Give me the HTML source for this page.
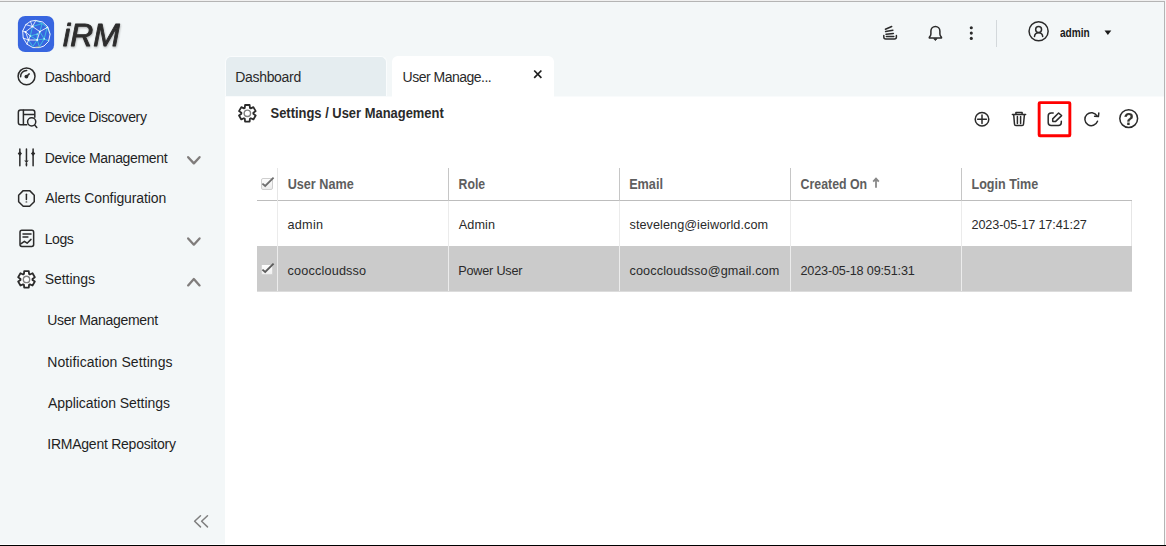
<!DOCTYPE html>
<html lang="en">
<head>
<meta charset="utf-8">
<title>iRM - User Management</title>
<style>
*{box-sizing:border-box;margin:0;padding:0}
html,body{width:1166px;height:546px;overflow:hidden;background:#fff}
body{font-family:"Liberation Sans",Arial,sans-serif;color:#1f1f1f;position:relative;font-size:14px}
.abs{position:absolute}
#frame{position:absolute;left:0;top:0;width:1166px;height:546px;background:#f3f7f8}
#topline{position:absolute;left:0;top:0;width:1166px;height:2px;background:linear-gradient(#f0f0f0 0,#f0f0f0 1px,#b4b4b4 1px,#b4b4b4 2px)}
#rightline{position:absolute;left:1164px;top:1px;width:1px;height:544px;background:#b4b4b4}
#rightwhite{position:absolute;left:1165px;top:0;width:1px;height:546px;background:#f6f6f6}
#bottomwhite{position:absolute;left:0;top:544px;width:1164px;height:1px;background:#fff}
#bottomline{position:absolute;left:0;top:545px;width:1166px;height:1px;background:#000}
#content{position:absolute;left:225px;top:96px;width:939px;height:449px;background:linear-gradient(#f9fbfc 0,#f9fbfc 1px,#fff 1px)}
.t{position:absolute;white-space:nowrap;line-height:16px;height:16px;font-size:14px;color:#1f1f1f}
.nav{left:45px}
.sub{left:47.5px}
.tab{position:absolute;top:56px;height:40px;border-radius:6px 6px 0 0;border:1px solid #fafcfd;border-bottom:none}
.th{position:absolute;white-space:nowrap;font-weight:bold;color:#5e5e5e;font-size:14px;line-height:16px;top:176px;transform-origin:0 0}
.td{position:absolute;white-space:nowrap;color:#2a2a2a;font-size:12.67px;line-height:16px}
.vh{position:absolute;top:168px;width:1px;height:33px;background:#c6c6c6}
.vb{position:absolute;top:201px;width:1px;height:45px;background:#ebebeb}
.vs{position:absolute;top:246px;width:1px;height:45px;background:#ececec}
svg{position:absolute;overflow:visible}
.ic{fill:none;stroke:#2b2b2b;stroke-width:1.5;stroke-linecap:round;stroke-linejoin:round}
</style>
<style id="fit">
#n1{left:44.63px !important;letter-spacing:-0.290px}
#n2{left:44.63px !important;letter-spacing:-0.392px}
#n3{left:44.66px !important;letter-spacing:-0.340px}
#n4{left:45.27px !important;letter-spacing:-0.103px}
#n5{left:44.66px !important;letter-spacing:-0.380px}
#n6{left:44.76px !important;letter-spacing:-0.063px}
#s1{left:47.22px !important;letter-spacing:-0.296px}
#s2{left:47.29px !important;letter-spacing:0.078px}
#s3{left:47.90px !important;letter-spacing:-0.046px}
#s4{left:47.34px !important;letter-spacing:-0.249px}
#tab1{left:235.24px !important;letter-spacing:-0.317px}
#tab2{left:402.54px !important;letter-spacing:-0.500px}
#bc{left:270px !important;transform:translateX(0.55px) scaleX(0.9237)}
#h1{left:287px !important;transform:translateX(0.64px) scaleX(0.9038)}
#h2{left:458px !important;transform:translateX(0.62px) scaleX(0.8748)}
#h3{left:629px !important;transform:translateX(0.14px) scaleX(0.9056)}
#h4{left:800px !important;transform:translateX(0.59px) scaleX(0.8814)}
#h5{left:971px !important;transform:translateX(0.53px) scaleX(0.8964)}
#c11{left:287.46px !important;letter-spacing:0.271px}
#c12{left:458.81px !important;letter-spacing:0.084px}
#c13{left:629.59px !important;letter-spacing:0.052px}
#c15{left:971.50px !important;letter-spacing:-0.119px}
#c21{left:287.48px !important;letter-spacing:0.182px}
#c22{left:458.15px !important;letter-spacing:-0.186px}
#c23{left:629.48px !important;letter-spacing:0.126px}
#c24{left:800.50px !important;letter-spacing:-0.179px}
</style>
</head>
<body>
<div id="frame"></div>
<div id="content"></div>

<!-- ===== logo ===== -->
<svg id="logo" style="left:18px;top:16px" width="36" height="36" viewBox="0 0 36 36">
  <rect x="-0.1" y="-0.1" width="36.2" height="36.2" rx="7.2" fill="#3866e0"/>
  <g fill="none" stroke="#3fd6e0" stroke-width="0.75" stroke-linejoin="round" stroke-linecap="round">
    <path d="M17.8 4.6 L24.2 7.6 L29.1 11.6 L26.2 22.9 L21.8 15.6 L24.2 7.6 L14.5 10.5"/>
    <path d="M12.3 20 L19.2 18.1 L21.8 15.6 M12.3 20 L19.2 24 L26.2 22.9 L21.4 30.6 L19.2 24 L14.8 30.6 L10.5 24 M14.5 10.5 L12.3 20 M19.2 18.1 L19.2 24 M26.2 22.9 L30.8 25 M29.1 11.6 L32 18"/>
  </g>
  <g fill="none" stroke="#ffffff" stroke-width="0.8" stroke-linejoin="round" stroke-linecap="round">
    <path d="M17.8 4.5 L24.6 6 L29.8 10.8 L32.1 18.2 L30.6 25.4 L26 30 L21.4 31.6 L14.8 31.6 L9 28.2 L5.2 22 L4.7 15 L7.8 8.6 L12.4 5.4 Z" stroke-width="0.9"/>
    <path d="M17.8 4.6 L14.5 10.5 L7.5 15.9 L4.7 15 M7.8 8.6 L14.5 10.5 L21.8 15.6 L29.1 11.6 M7.5 15.9 L10.5 24 L19.2 24 L21.8 15.6 M7.5 15.9 L12.3 20 L10.5 24 L5.2 22 M10.5 24 L9 28.2 M12.4 5.4 L14.5 10.5"/>
  </g>
  <g fill="#ffffff">
    <circle cx="14.5" cy="10.5" r="1.1"/><circle cx="7.5" cy="15.9" r="1"/><circle cx="21.8" cy="15.6" r="0.95"/><circle cx="29.1" cy="11.6" r="0.8"/><circle cx="10.5" cy="24" r="0.9"/><circle cx="19.2" cy="24" r="0.9"/><circle cx="26.2" cy="22.9" r="0.8" fill="#c8fbff"/><circle cx="12.3" cy="20" r="0.75" fill="#c8fbff"/><circle cx="19.2" cy="18.1" r="0.7" fill="#c8fbff"/>
  </g>
  <path d="M17.4 31.2 L21.6 30.8" stroke="#b9c98a" stroke-width="0.8" fill="none"/>
</svg>
<svg id="logotext" style="left:58px;top:14px;will-change:transform" width="70" height="40" viewBox="0 0 70 40">
  <defs><filter id="ds" x="-20%" y="-20%" width="140%" height="150%"><feGaussianBlur stdDeviation="1.2"/></filter></defs>
  <text x="5.6" y="33.2" font-family="Liberation Sans, Arial, sans-serif" font-style="italic" font-size="31.6" fill="#000" stroke="#000" stroke-width="0.9" stroke-linejoin="round" opacity="0.3" filter="url(#ds)" textLength="56.6" lengthAdjust="spacingAndGlyphs">iRM</text>
  <text x="5.1" y="31.7" font-family="Liberation Sans, Arial, sans-serif" font-style="italic" font-size="31.6" fill="#2d2d2d" stroke="#2d2d2d" stroke-width="0.9" stroke-linejoin="round" textLength="56.6" lengthAdjust="spacingAndGlyphs">iRM</text>
</svg>

<!-- ===== sidebar ===== -->
<div id="sidebar">
  <!-- dashboard icon -->
  <svg style="left:16px;top:66px" width="22" height="22" viewBox="0 0 22 22">
    <circle class="ic" cx="10.55" cy="10.35" r="8.45" stroke-width="1.7"/>
    <path class="ic" d="M4.6 10.7 A5.95 5.95 0 0 1 10.7 4.5" stroke-width="1.2"/>
    <path class="ic" d="M10.4 10.6 L13.2 7.9" stroke-width="1" stroke="#888"/>
    <circle cx="10.4" cy="10.6" r="1.9" fill="#2b2b2b"/>
  </svg>
  <div class="t nav" id="n1" style="top:69px">Dashboard</div>

  <!-- device discovery icon -->
  <svg style="left:16px;top:108px" width="23" height="22" viewBox="0 0 23 22">
    <path class="ic" d="M10.8 16.85 H4.6 Q2.35 16.85 2.35 14.6 V4.15 Q2.35 1.9 4.6 1.9 H16.55 Q18.8 1.9 18.8 4.15 V9.2" stroke-width="1.7"/>
    <path class="ic" d="M7.4 2.2 V16.6" stroke-width="1.3" stroke="#4a4a4a"/>
    <path class="ic" d="M7.9 6.4 H18.2" stroke-width="1.5" stroke="#8c8c8c" stroke-linecap="butt"/>
    <circle class="ic" cx="15.67" cy="13.86" r="4.1" stroke-width="1.7"/>
    <path class="ic" d="M18.9 17.2 L20.8 19.4" stroke-width="1.5"/>
  </svg>
  <div class="t nav" id="n2" style="top:109px">Device Discovery</div>

  <!-- device management icon -->
  <svg style="left:16px;top:146px" width="22" height="23" viewBox="0 0 22 23">
    <path class="ic" d="M3.85 3 V19.8 M17.1 3 V19.8 M10.45 3 V14.2 M10.45 18.2 V19.8" stroke-width="2"/>
    <path fill="#2b2b2b" d="M3.85 5.2 L6 7.6 L3.85 10 L1.7 7.6 Z M17.1 5.2 L19.25 7.6 L17.1 10 L14.95 7.6 Z"/>
    <path fill="#2b2b2b" d="M8.2 14.4 H12.7 L10.45 17 Z"/>
    <path class="ic" d="M10.45 17 V18.4" stroke-width="1.2" stroke="#777"/>
  </svg>
  <div class="t nav" id="n3" style="top:150px">Device Management</div>
  <svg style="left:186px;top:155px" width="16" height="11" viewBox="0 0 16 11"><path d="M2.15 2.2 L7.85 8.4 L13.55 2.2" fill="none" stroke="#807d7c" stroke-width="2.3" stroke-linecap="round" stroke-linejoin="round"/></svg>

  <!-- alerts icon -->
  <svg style="left:16px;top:188px" width="22" height="22" viewBox="0 0 22 22">
    <path class="ic" d="M7.22 2.65 H13.68 L18.25 7.22 V13.68 L13.68 18.25 H7.22 L2.65 13.68 V7.22 Z" stroke-width="1.7" stroke-linejoin="miter"/>
    <path class="ic" d="M10.4 6.2 V11.6" stroke-width="1.6" stroke-linecap="butt"/>
    <circle cx="10.4" cy="13.9" r="0.95" fill="#777"/>
  </svg>
  <div class="t nav" id="n4" style="top:190px">Alerts Configuration</div>

  <!-- logs icon -->
  <svg style="left:16px;top:227px" width="22" height="23" viewBox="0 0 22 23">
    <rect class="ic" x="4.0" y="3.35" width="13.65" height="16.15" rx="1.9" stroke-width="1.7"/>
    <path class="ic" d="M7 7 H15 M7 9.9 H11.9" stroke-width="1.3" stroke="#8a8a8a" stroke-linecap="butt"/>
    <path class="ic" d="M4.8 16.8 L8.4 14.3 L11.1 16.2 L15 12.4" stroke-width="1.15" stroke="#666"/>
  </svg>
  <div class="t nav" id="n5" style="top:231px">Logs</div>
  <svg style="left:186px;top:236px" width="16" height="11" viewBox="0 0 16 11"><path d="M2.15 2.4 L7.85 8.65 L13.55 2.4" fill="none" stroke="#807d7c" stroke-width="2.3" stroke-linecap="round" stroke-linejoin="round"/></svg>

  <!-- settings icon -->
  <svg style="left:14px;top:267px" width="26" height="26" viewBox="0 0 26 26"><g transform="translate(12.50 12.40)">
    <path d="M-2.56 -5.43 L-2.29 -8.29 L2.29 -8.29 L2.56 -5.43 L3.42 -4.93 L6.03 -6.13 L8.32 -2.16 L5.98 -0.50 L5.98 0.50 L8.32 2.16 L6.03 6.13 L3.42 4.93 L2.56 5.43 L2.29 8.29 L-2.29 8.29 L-2.56 5.43 L-3.42 4.93 L-6.03 6.13 L-8.32 2.16 L-5.98 0.50 L-5.98 -0.50 L-8.32 -2.16 L-6.03 -6.13 L-3.42 -4.93Z" fill="#fff" stroke="#2b2b2b" stroke-width="1.8" stroke-linejoin="round"/>
    <circle cx="0" cy="0" r="3.2" fill="none" stroke="#808080" stroke-width="1.4"/>
  </g></svg>
  <div class="t nav" id="n6" style="top:271px">Settings</div>
  <svg style="left:186px;top:277px" width="16" height="11" viewBox="0 0 16 11"><path d="M2.15 8.4 L7.85 2.0 L13.55 8.4" fill="none" stroke="#807d7c" stroke-width="2.3" stroke-linecap="round" stroke-linejoin="round"/></svg>

  <div class="t sub" id="s1" style="top:312px">User Management</div>
  <div class="t sub" id="s2" style="top:354px">Notification Settings</div>
  <div class="t sub" id="s3" style="top:395px">Application Settings</div>
  <div class="t sub" id="s4" style="top:436px">IRMAgent Repository</div>

  <svg style="left:192px;top:513px" width="18" height="16" viewBox="0 0 18 16"><path d="M8.5 2.7 L2.6 8.3 L8.5 13.9 M15.5 2.7 L9.6 8.3 L15.5 13.9" fill="none" stroke="#808080" stroke-width="1.5" stroke-linecap="round" stroke-linejoin="round"/></svg>
</div>

<!-- ===== header right ===== -->
<div id="hdr">
  <!-- stack icon -->
  <svg style="left:882px;top:25px" width="17" height="17" viewBox="0 0 17 17">
    <path class="ic" d="M1.8 10.6 V12.1 Q1.8 14.1 3.8 14.1 H12.4 Q14.4 14.1 14.4 12.1 V10.6" stroke-width="1.4"/>
    <path class="ic" d="M4.4 11.4 H11.8 M4.1 9.3 L11.4 8.4 M3.6 6.6 L10.9 5.2 M3.4 4.2 L9.7 1.5" stroke-width="1.15"/>
  </svg>
  <!-- bell -->
  <svg style="left:927px;top:25px" width="17" height="18" viewBox="0 0 17 18">
    <path class="ic" d="M2.3 12.9 Q2.1 12.4 2.6 11.9 Q3.9 10.6 3.9 9 V6.1 A4.5 4.7 0 0 1 12.9 6.1 V9 Q12.9 10.6 14.2 11.9 Q14.7 12.4 14.5 12.9 Z" stroke-width="1.4"/>
    <path d="M6.7 13.7 H10.1 L8.4 15.6 Z" fill="#2b2b2b" stroke="#2b2b2b" stroke-width="0.8" stroke-linejoin="round"/>
  </svg>
  <!-- dots -->
  <svg style="left:968px;top:25px" width="7" height="16" viewBox="0 0 7 16">
    <circle cx="3.3" cy="2.8" r="1.55" fill="#2b2b2b"/><circle cx="3.3" cy="8.1" r="1.55" fill="#2b2b2b"/><circle cx="3.3" cy="13.4" r="1.55" fill="#2b2b2b"/>
  </svg>
  <div class="abs" style="left:996px;top:20px;width:1px;height:27px;background:#d3d8db"></div>
  <!-- user -->
  <svg style="left:1027px;top:20px" width="23" height="23" viewBox="0 0 23 23">
    <circle class="ic" cx="11.6" cy="11.3" r="9.55" stroke-width="1.65"/>
    <circle class="ic" cx="11.6" cy="9.5" r="2.95" stroke-width="1.5"/>
    <path class="ic" d="M7.5 16.5 A4.11 4.11 0 0 1 15.7 16.5" stroke-width="1.5"/>
  </svg>
  <div class="t" id="adm" style="left:1060px;top:25px;font-size:12.4px;line-height:17px;font-weight:bold;color:#1a1a1a;transform:scaleX(0.815);transform-origin:0 0">admin</div>
  <svg style="left:1104px;top:30px" width="8" height="6" viewBox="0 0 8 6"><path d="M0.5 0.5 H7.3 L3.9 5 Z" fill="#1a1a1a"/></svg>
</div>

<!-- ===== tabs ===== -->
<div class="tab" style="left:225px;width:162px;background:#e5edf0"></div>
<div class="t" id="tab1" style="left:235.4px;top:69px;color:#2a2a2a">Dashboard</div>
<div class="tab" style="left:392px;width:162px;height:41px;background:#fff;border-color:#fff"></div>
<div class="t" id="tab2" style="left:403px;top:69px;color:#2a2a2a">User Manage...</div>
<svg style="left:533px;top:70px" width="10" height="10" viewBox="0 0 10 10"><path d="M1.2 0.5 L8.4 7.8 M8.4 0.5 L1.2 7.8" stroke="#1f1f1f" stroke-width="1.7" fill="none"/></svg>

<!-- ===== breadcrumb ===== -->
<svg style="left:235px;top:101px" width="26" height="26" viewBox="0 0 26 26"><g transform="translate(12.35 12.30)">
    <path d="M-2.56 -5.43 L-2.29 -8.29 L2.29 -8.29 L2.56 -5.43 L3.42 -4.93 L6.03 -6.13 L8.32 -2.16 L5.98 -0.50 L5.98 0.50 L8.32 2.16 L6.03 6.13 L3.42 4.93 L2.56 5.43 L2.29 8.29 L-2.29 8.29 L-2.56 5.43 L-3.42 4.93 L-6.03 6.13 L-8.32 2.16 L-5.98 0.50 L-5.98 -0.50 L-8.32 -2.16 L-6.03 -6.13 L-3.42 -4.93Z" fill="#fff" stroke="#2b2b2b" stroke-width="1.8" stroke-linejoin="round"/>
    <circle cx="0" cy="0" r="3.2" fill="none" stroke="#808080" stroke-width="1.4"/>
  </g></svg>
<div class="t" id="bc" style="left:270.4px;top:105px;font-weight:bold;font-size:14px;color:#2a2a2a;transform-origin:0 0">Settings / User Management</div>

<!-- ===== toolbar ===== -->
<div id="tools">
  <svg style="left:973px;top:110px" width="18" height="18" viewBox="0 0 18 18">
    <circle class="ic" cx="9.0" cy="9.25" r="6.8" stroke-width="1.05"/>
    <path class="ic" d="M4.6 9.3 H13.4 M9.0 5.0 V13.5" stroke-width="1.15" stroke="#555" stroke-linecap="butt"/>
  </svg>
  <svg style="left:1010px;top:109px" width="18" height="19" viewBox="0 0 18 19">
    <path class="ic" d="M5.9 5.2 V3.4 H12.1 V5.2" stroke-width="1.4" stroke="#7a7a7a" fill="#bdbdbd"/>
    <path class="ic" d="M2.4 5.5 H15.6" stroke-width="1.15"/>
    <path class="ic" d="M3.7 5.8 L4.5 15.3 Q4.6 16.6 5.9 16.6 H12.1 Q13.4 16.6 13.5 15.3 L14.4 5.8" stroke-width="1.15"/>
    <path class="ic" d="M7.4 7.6 V14.4 M10.6 7.6 V14.4" stroke-width="1.15"/>
  </svg>
  <svg style="left:1030px;top:95px" width="48" height="48" viewBox="0 0 48 48">
    <rect x="9.15" y="7.65" width="30.7" height="33.1" rx="0.8" fill="none" stroke="#ff0000" stroke-width="2.9"/>
  </svg>
  <svg style="left:1046px;top:111px" width="18" height="17" viewBox="0 0 18 17">
    <path class="ic" d="M7.2 1.9 H5.2 Q2.2 1.9 2.2 4.9 V11.4 Q2.2 14.4 5.2 14.4 H12.3 Q15.3 14.4 15.3 11.4 V10.2" stroke-width="1.15"/>
    <path class="ic" d="M6.7 10.1 V7.9 L12.6 2 L15.6 4.6 L9.4 10.6 H7 Z" stroke-width="1.15"/>
  </svg>
  <svg style="left:1083px;top:110px" width="18" height="18" viewBox="0 0 18 18">
    <path class="ic" d="M14.5 11.3 A6.5 6.5 0 1 1 14.0 5.9" stroke-width="1.15"/>
    <path class="ic" d="M15.8 3.0 L15.4 6.6 L11.6 6.3" stroke-width="1.15"/>
  </svg>
  <svg style="left:1118px;top:108px;will-change:transform" width="22" height="22" viewBox="0 0 22 22">
    <circle class="ic" cx="10.7" cy="10.6" r="8.9" stroke-width="1.7" stroke="#33332e"/>
    <text x="10.75" y="16.7" text-anchor="middle" font-family="Liberation Sans, Arial, sans-serif" font-weight="bold" font-size="16.4" fill="#33332e" stroke="#33332e" stroke-width="0.2">?</text>
  </svg>
</div>

<!-- ===== table ===== -->
<div id="table">
  <div class="abs" style="left:257px;top:246px;width:875px;height:46px;background:#cbcbcb"></div>
  <div class="abs" style="left:257px;top:291px;width:875px;height:1px;background:#dcdcdc"></div>
  <div class="abs" style="left:257px;top:200px;width:875px;height:1px;background:#bdbdbd"></div>
  <div class="abs" style="left:1131px;top:201px;width:1px;height:45px;background:#e6e6e6"></div>

  <div class="vh" style="left:277px;background:#e6e6e6"></div><div class="vh" style="left:448px"></div><div class="vh" style="left:619px"></div><div class="vh" style="left:790px"></div><div class="vh" style="left:961px"></div>
  <div class="vb" style="left:277px"></div><div class="vb" style="left:448px"></div><div class="vb" style="left:619px"></div><div class="vb" style="left:790px"></div><div class="vb" style="left:961px"></div>
  <div class="vs" style="left:277px"></div><div class="vs" style="left:448px"></div><div class="vs" style="left:619px"></div><div class="vs" style="left:790px"></div><div class="vs" style="left:961px"></div>

  <!-- header checkbox -->
  <div class="abs" style="left:261px;top:178px;width:12px;height:12px;border:1px solid #cfcfcf;border-radius:2px;background:linear-gradient(#fdfdfd,#ececec)"></div>
  <svg style="left:260px;top:175px" width="16" height="14" viewBox="0 0 16 14"><path d="M2.4 8.6 L5.2 11 L13.6 2.6" fill="none" stroke="#6e6e6e" stroke-width="1.8"/></svg>
  <!-- row checkbox -->
  <div class="abs" style="left:261px;top:265px;width:12px;height:10px;border:1px solid #d4d4d4;border-top:none;border-radius:0 0 2px 2px;background:linear-gradient(#fdfdfd,#f0f0f0)"></div>
  <svg style="left:260px;top:261px" width="16" height="14" viewBox="0 0 16 14"><path d="M2.4 8.6 L5.2 11 L13.6 2.6" fill="none" stroke="#5c5c5c" stroke-width="1.9"/></svg>

  <div class="th" id="h1" style="left:287.5px">User Name</div>
  <div class="th" id="h2" style="left:458.5px">Role</div>
  <div class="th" id="h3" style="left:629.5px">Email</div>
  <div class="th" id="h4" style="left:800.5px">Created On</div>
  <svg style="left:872px;top:177px" width="8" height="12" viewBox="0 0 8 12"><path d="M4 10.8 V2 M1.2 4.6 L4 1.6 L6.8 4.6" fill="none" stroke="#888" stroke-width="1.8" stroke-linejoin="miter"/></svg>
  <div class="th" id="h5" style="left:971.5px">Login Time</div>

  <div class="td" id="c11" style="left:287.5px;top:217px">admin</div>
  <div class="td" id="c12" style="left:458.5px;top:217px">Admin</div>
  <div class="td" id="c13" style="left:629.5px;top:217px">steveleng@ieiworld.com</div>
  <div class="td" id="c15" style="left:971.5px;top:217px">2023-05-17 17:41:27</div>

  <div class="td" id="c21" style="left:287.5px;top:263px">cooccloudsso</div>
  <div class="td" id="c22" style="left:458.5px;top:263px">Power User</div>
  <div class="td" id="c23" style="left:629.5px;top:263px">cooccloudsso@gmail.com</div>
  <div class="td" id="c24" style="left:800.5px;top:263px">2023-05-18 09:51:31</div>
</div>

<!-- frame borders on top -->
<div id="topline"></div>
<div id="rightwhite"></div>
<div id="rightline"></div>
<div id="bottomwhite"></div>
<div id="bottomline"></div>
</body>
</html>
